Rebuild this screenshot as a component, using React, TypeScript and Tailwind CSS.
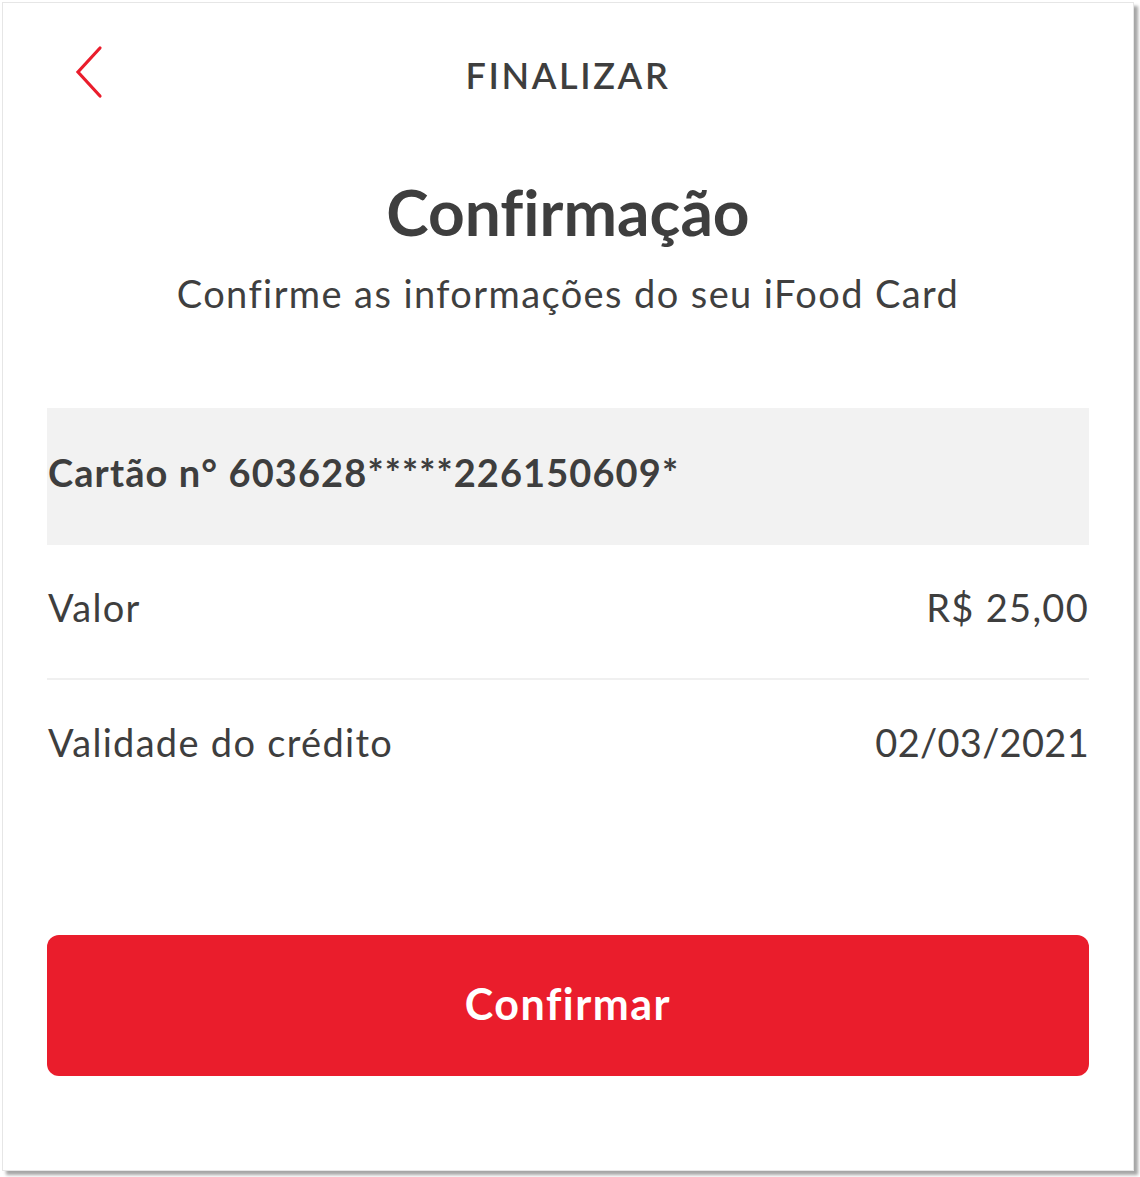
const rows = [
  { label: 'Valor', value: 'R$ 25,00', valueTracking: 'tracking-[1.3px]' },
  { label: 'Validade do crédito', value: '02/03/2021', valueTracking: 'tracking-[0.3px]' },
]

export default function App() {
  return (
    <div className="w-[1140px] h-[1177px] bg-white pl-[2px] pt-[2px] font-['Lato','Open_Sans',sans-serif] text-[#3e3e3e] [font-variant-ligatures:none]">
      <div className="w-[1132px] h-[1169px] bg-white border border-[#e6e6e6] shadow-[4px_4px_3px_rgba(0,0,0,0.35)] px-[44px] flex flex-col">
        {/* Header */}
        <div className="grid grid-cols-[1fr_auto_1fr] items-center h-[144px]">
          <button className="w-[60px] h-[60px] flex items-center text-[#ea1d2c]">
            <svg width="30" height="54" viewBox="0 0 30 54" fill="none" className="ml-[28px] -mt-[6px]">
              <path d="M25 3 L3 27 L25 51" stroke="currentColor" strokeWidth="3.2" strokeLinecap="round" strokeLinejoin="miter" />
            </svg>
          </button>
          <h1 className="text-[36px] font-semibold tracking-[2.6px] leading-none">FINALIZAR</h1>
          <div />
        </div>

        {/* Title */}
        <div className="flex flex-col items-center">
          <h2 className="mt-[33px] text-[64px] font-bold leading-none">Confirmação</h2>
          <p className="mt-[30px] text-[38px] font-normal tracking-[1.4px] leading-none text-[#3f3f3f]">
            Confirme as informações do seu iFood Card
          </p>
        </div>

        {/* Card number */}
        <div className="mt-[96px] h-[137px] bg-[#f2f2f2] flex items-center pl-[1px] pb-[10px]">
          <span className="text-[38px] font-bold tracking-[1.1px] leading-none">Cartão n° 603628*****226150609*</span>
        </div>

        {/* Details */}
        <div className="flex flex-col">
          {rows.map((row, i) => (
            <div
              key={row.label}
              className={`flex items-center justify-between text-[38px] leading-none pb-[10px] ${
                i === 0 ? 'h-[135px] border-b-2 border-[#f0f0f0]' : 'h-[133px]'
              }`}
            >
              <span className="pl-[1px] tracking-[1.3px]">{row.label}</span>
              <span className={row.valueTracking}>{row.value}</span>
            </div>
          ))}
        </div>

        {/* Confirm */}
        <button className="mt-[122px] h-[141px] w-full rounded-[12px] bg-[#ea1d2c] text-white text-[43px] font-bold tracking-[1.5px] leading-none pb-[4px]">
          Confirmar
        </button>
      </div>
    </div>
  )
}
